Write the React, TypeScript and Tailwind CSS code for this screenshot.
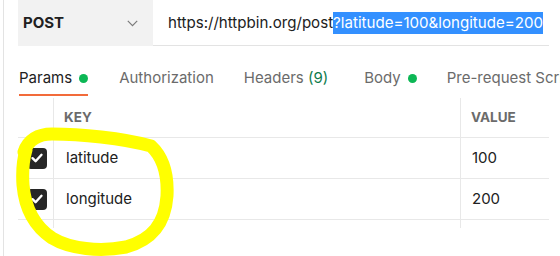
import React from "react";

function Check() {
  return (
    <div className="w-[20px] h-[21px] rounded-[4px] bg-[#262626] flex items-center justify-center">
      <svg width="14" height="14" viewBox="0 0 14 14" fill="none">
        <path d="M2.5 7.2 L5.6 10.2 L11.5 3.8" stroke="white" strokeWidth="2.4" strokeLinecap="round" strokeLinejoin="round" />
      </svg>
    </div>
  );
}

export default function App() {
  const font = { fontFamily: "Inter, 'Noto Sans', sans-serif" };
  return (
    <div className="w-[560px] h-[256px] bg-white overflow-hidden relative" style={font}>
      <div className="ml-[3px] h-[256px] border-l border-[#e3e3e3] flex flex-col">
        {/* URL row */}
        <div className="flex h-[46px] pl-[14px] pr-[11px]">
          <div className="shrink-0 w-[135px] h-[46px] bg-[#f2f2f2] flex items-center justify-between pl-[5px] pr-[15px]">
            <span className="text-[15px] font-bold text-[#212121]">POST</span>
            <svg width="11" height="7" viewBox="0 0 11 7" fill="none">
              <path d="M0.8 0.8 L5.5 5.6 L10.2 0.8" stroke="#7a7a7a" strokeWidth="1.2" />
            </svg>
          </div>
          <div className="flex-1 min-w-0 border-b border-[#e3e3e3] flex items-center pl-[15px] whitespace-nowrap overflow-visible">
            <span className="shrink-0 text-[15.1px] text-[#212121] leading-[22px]">https://httpbin.org/post</span>
            <span className="shrink-0 text-[15.1px] text-white bg-[#3390ff] leading-[22px]">?latitude=100&amp;longitude=200</span>
          </div>
        </div>
        {/* Tabs */}
        <div className="flex items-end pl-[15px] mt-[21px] whitespace-nowrap text-[15px] leading-[22px]">
          <div className="shrink-0 flex flex-col">
            <div className="flex items-center gap-[7px] pb-[5px]">
              <span className="text-[#212121]">Params</span>
              <span className="w-[9px] h-[9px] rounded-full bg-[#0cb755]" />
            </div>
            <div className="h-[2px] bg-[#f26b3a]" />
          </div>
          <div className="shrink-0 ml-[31px] pb-[7px] text-[#6b6b6b]">Authorization</div>
          <div className="shrink-0 ml-[30px] pb-[7px] text-[#6b6b6b]">
            Headers <span className="text-[#0e7c4c]">(9)</span>
          </div>
          <div className="shrink-0 ml-[36px] pb-[7px] flex items-center gap-[7px] text-[#6b6b6b]">
            <span>Body</span>
            <span className="w-[9px] h-[9px] rounded-full bg-[#0cb755]" />
          </div>
          <div className="shrink-0 ml-[30px] pb-[7px] text-[#6b6b6b]">Pre-request Script</div>
        </div>
        {/* Table */}
        <div className="mt-[2px] ml-[14px] w-[531px] text-[#212121]">
          <div className="flex h-[40px] border-b border-[#e8e8e8]">
            <div className="w-[36px] border-r border-[#e8e8e8]" />
            <div className="w-[407px] border-r border-[#e8e8e8] flex items-center pl-[10px] text-[13.5px] font-bold text-[#6b6b6b]">KEY</div>
            <div className="flex-1 flex items-center pl-[10px] text-[13.5px] font-bold text-[#6b6b6b]">VALUE</div>
          </div>
          {[
            ["latitude", "100"],
            ["longitude", "200"],
          ].map(([k, v]) => (
            <div key={k} className="flex h-[41px] border-b border-[#e8e8e8]">
              <div className="w-[36px] border-r border-[#e8e8e8] flex items-center pl-[9px]">
                <Check />
              </div>
              <div className="w-[407px] border-r border-[#e8e8e8] flex items-center pl-[12px] text-[15px]">{k}</div>
              <div className="flex-1 flex items-center pl-[11px] text-[15px]">{v}</div>
            </div>
          ))}
          <div className="flex h-[8px]">
            <div className="w-[36px] border-r border-[#e8e8e8]" />
            <div className="w-[407px] border-r border-[#e8e8e8]" />
          </div>
        </div>
      </div>
      {/* Hand-drawn annotation */}
      <svg className="absolute left-0 top-0 pointer-events-none" width="560" height="256" viewBox="0 0 560 256" fill="none">
        <path
          d="M24 152 C28 140 38 134 52 134 C80 134 122 138 151 146 C164 158 168 176 167 196 C165 224 152 240 126 247 C100 252 70 249 52 238 C34 226 25 208 23 185 C22 170 23 160 26 150"
          stroke="#ffff00"
          strokeWidth="13"
          strokeLinecap="round"
          strokeLinejoin="round"
        />
      </svg>
    </div>
  );
}
